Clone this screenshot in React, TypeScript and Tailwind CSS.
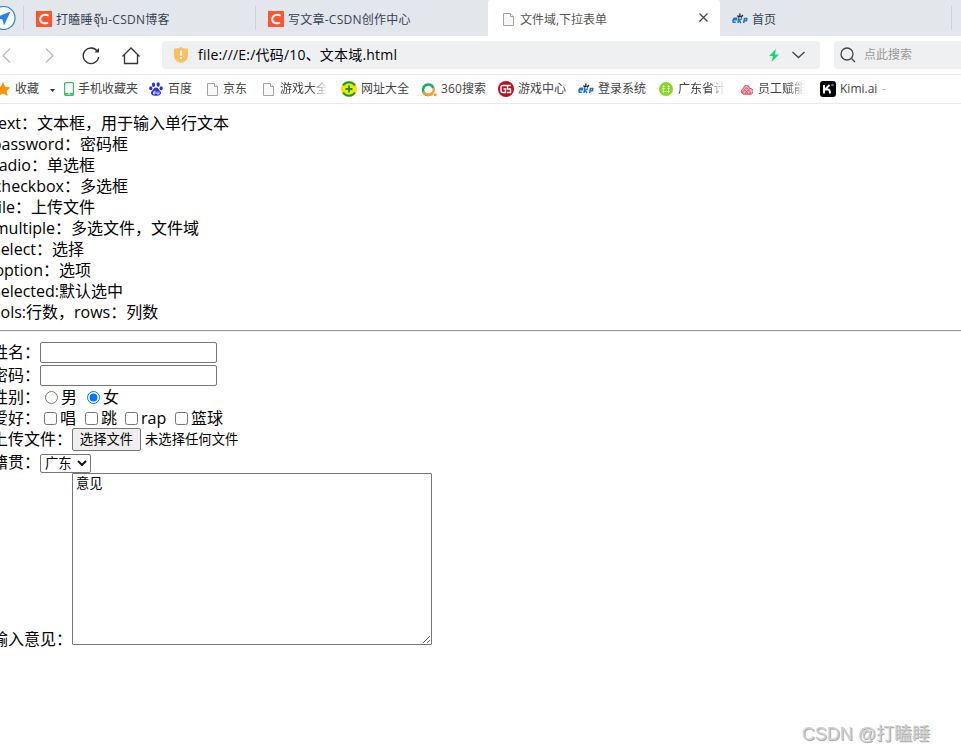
import { FC, ReactNode } from "react";

const FileIcon: FC = () => (
    <svg className="shrink-0" width="12" height="14" viewBox="0 0 12 14" fill="#f7f7f7" stroke="#a3a3a3">
        <path d="M.5 1.500h7l3 3v9H.5z" />
        <path d="M7.500 1.500v3h3" fill="#fff" />
    </svg>
);

const CsdnIcon: FC = () => (
    <svg className="shrink-0" width="16" height="16" viewBox="0 0 16 16">
        <path d="M0 0h16v16H0z" fill="#fc5531" />
        <path
            d="M12.700 4.600C9 2.600 4.500 4 4.200 8.200c-.1 3.700 3.800 4.900 7.800 3.500"
            fill="none"
            stroke="#fff"
            strokeWidth="2"
        />
    </svg>
);

const EkpIcon: FC = () => (
    <svg className="shrink-0" width="16" height="16" viewBox="0 0 16 16" fill="none" strokeWidth="1.500">
        <path d="M.8 8.800h3.600l.2-1.600H2.200L1 9.200l.2 2h2.600" stroke="#1b78c4" />
        <path d="M6.800 7L6 12M10 7.500L7 9.500l2 2.500" stroke="#1b78c4" />
        <path d="M11.600 12l.9-4.500h2.300l-.3 2.300h-2.300" stroke="#1b78c4" />
        <path d="M5.500 4.500l1.800 2M7.800 2.500l.2 3.500M10.800 4L9 6.500" stroke="#222" strokeWidth="1.300" />
    </svg>
);

const Text: FC<{ width: string; className?: string; children: ReactNode }> = ({ width, className = "", children }) => (
    <span className={`block shrink-0 whitespace-nowrap ${width} ${className}`}>{children}</span>
);

const TabBar: FC = () => (
    <div className="flex h-9 bg-[#e3e6eb] text-xs text-[#354355]">
        <div className="relative w-6 shrink-0">
            <svg className="absolute top-[6px] left-[-9px]" width="25" height="24" viewBox="0 0 25 24">
                <circle cx="12.500" cy="12" r="11.500" fill="#fff" stroke="#2c80e8" strokeWidth="1.200" />
                <path d="M19.500 5.500L5 11.500l6.500 2 1.500 6z" fill="#2681f2" />
            </svg>
            <span className="absolute top-[6px] right-0 h-6 w-px bg-[#cfd3d9]" />
        </div>
        <div className="flex w-[232px] shrink-0 items-center gap-1 pt-[2px] pl-3">
            <CsdnIcon />
            <Text width="w-[190px]" className="pt-px tracking-[0.25px]">打瞌睡จุ๊บ-CSDN博客</Text>
        </div>
        <div className="relative flex w-[232px] shrink-0 items-center gap-1 pt-[2px] pl-3">
            <span className="absolute top-[6px] left-[-1px] h-6 w-px bg-[#cfd3d9]" />
            <CsdnIcon />
            <Text width="w-[190px]" className="pt-px tracking-[0.25px]">写文章-CSDN创作中心</Text>
        </div>
        <div className="flex w-[232px] shrink-0 items-center rounded-t-[3px] bg-white pt-[2px] pl-[15px] text-[#555]">
            <FileIcon />
            <Text width="w-[179px]" className="pt-px pl-[5px]">文件域,下拉表单</Text>
            <svg width="9" height="9" viewBox="0 0 9 9" stroke="#444" className="mt-[-3px] ml-[5px]">
                <path d="M.5.5l8 8M8.500.5l-8 8" strokeWidth="1.200" />
            </svg>
        </div>
        <div className="flex w-[231px] shrink-0 items-center gap-1 pt-[2px] pl-3">
            <EkpIcon />
            <Text width="w-[190px]" className="pt-px">首页</Text>
        </div>
        <span className="mt-[6px] h-6 w-px bg-[#cfd3d9]" />
    </div>
);

const AddressBar: FC = () => (
    <div className="flex h-[38px] items-center">
        <svg className="shrink-0" width="162" height="38" viewBox="0 0 162 38" fill="none">
            <path d="M10 12.500L3 19.500l7 7M46 12.500l7 7-7 7" stroke="#b9b9b9" strokeWidth="1.200" />
            <path d="M97.500 15.500A7.800 7.800 0 1 0 98.700 21" stroke="#333" strokeWidth="1.300" />
            <path d="M94.500 16.500h4.500v-4.500z" fill="#333" />
            <path d="M122.500 20.500L131 12l8.500 8.500M124.500 19v8.500h13V19" stroke="#333" strokeWidth="1.300" />
        </svg>
        <div className="flex h-7 w-[658px] shrink-0 items-center rounded bg-[#eff0f2] pl-3">
            <svg className="shrink-0" width="14" height="16" viewBox="0 0 14 16">
                <path d="M0 1.500Q4 2 7 0q3 2 7 1.500V9q0 5-7 7-7-2-7-7z" fill="#ffbf5f" />
                <path d="M7 3.500v5M7 10v2" stroke="#fff" strokeWidth="2" />
            </svg>
            <Text width="w-[581px]" className="pl-[10px] text-sm tracking-[0.2px] text-black">
                file:///E:/代码/10、文本域.html
            </Text>
            <svg className="shrink-0" width="10" height="13" viewBox="0 0 10 13">
                <path d="M7 0L0 7h4L2.500 13 10 5.500H6z" fill="#18d675" />
            </svg>
            <svg className="ml-[13px] shrink-0" width="13" height="8" viewBox="0 0 13 8" fill="none" stroke="#444">
                <path d="M.5 1l6 5.500 6-5.500" strokeWidth="1.300" />
            </svg>
        </div>
        <div className="ml-[14px] flex h-7 w-[140px] items-center rounded-l bg-[#eff0f2] pl-[6px] text-xs text-[#999]">
            <svg width="16" height="16" viewBox="0 0 16 16" fill="none" stroke="#444" strokeWidth="1.300">
                <circle cx="7" cy="7" r="6" />
                <path d="M11.500 11.500L15 15" />
            </svg>
            <span className="ml-2">点此搜索</span>
        </div>
    </div>
);

const Bookmarks: FC = () => (
    <div className="flex h-[30px] items-center border-y border-[#ebebeb] text-xs text-[#444]">
        <svg className="ml-[-5px] shrink-0" width="16" height="16" viewBox="0 0 16 16" fill="#ff9200">
            <path d="M8 1l2.200 4.700 5.100.7-3.700 3.500 1 5.100L8 12.500 3.400 15l1-5.100L.7 6.400l5.100-.7z" />
        </svg>
        <Text width="w-[35px]" className="ml-1">收藏</Text>
        <svg className="mt-[2px] shrink-0" width="5" height="3" viewBox="0 0 5 3" fill="#333">
            <path d="M0 0h5L2.500 3z" />
        </svg>
        <svg className="ml-[9px] shrink-0" width="10" height="14" viewBox="0 0 10 14" fill="none">
            <rect x=".6" y=".6" width="8.800" height="12.800" rx="1" stroke="#3dbb68" strokeWidth="1.200" />
            <path d="M1 11.800h8" stroke="#3dbb68" strokeWidth="1.800" />
            <path d="M4 12h2" stroke="#fff" />
        </svg>
        <Text width="w-[71px]" className="ml-1">手机收藏夹</Text>
        <svg className="shrink-0" width="14" height="14" viewBox="0 0 14 14" fill="#2b32d9">
            <ellipse cx="4.500" cy="2.700" rx="1.600" ry="2.300" />
            <ellipse cx="9.200" cy="2.500" rx="1.600" ry="2.300" />
            <ellipse cx="1.800" cy="6.200" rx="1.600" ry="2" />
            <ellipse cx="12.200" cy="6.200" rx="1.600" ry="2" />
            <path d="M7 5.500c2 0 2.500 2 4.500 4 1.500 2-.5 4.700-4.500 4.200-4 .5-6-2.200-4.500-4.200C4.500 7.500 5 5.500 7 5.500z" />
            <path d="M6 8.500v3.500H4.500V10H6M8 9.500V12h2V9.500" fill="none" stroke="#fff" strokeWidth=".8" />
        </svg>
        <Text width="w-[39px]" className="ml-[5px]">百度</Text>
        <FileIcon />
        <Text width="w-[40px]" className="ml-[4px]">京东</Text>
        <FileIcon />
        <Text width="w-[48px]" className="mr-[13px] ml-[5px] mask-r-from-65%">游戏大全</Text>
        <svg className="shrink-0" width="16" height="16" viewBox="0 0 16 16">
            <circle cx="8" cy="8" r="8" fill="#ffe100" />
            <path d="M2 4.500A7.200 7.200 0 0 1 14 4.500M2 11.500a7.200 7.200 0 0 0 12 0M8 4.500v7M4.500 8h7" stroke="#0a9d46" strokeWidth="2" fill="none" />
        </svg>
        <Text width="w-[60px]" className="ml-1">网址大全</Text>
        <svg className="shrink-0" width="16" height="16" viewBox="0 0 16 16" fill="none">
            <path d="M11.500 12A5.300 5.300 0 1 1 12.300 7" stroke="#18ad6b" strokeWidth="2.600" />
            <path d="M2.500 10.500a5.300 5.300 0 0 0 10-3.500" stroke="#fa9e2e" strokeWidth="2.600" />
            <circle cx="14.300" cy="13.800" r="1.500" fill="#fa9e2e" />
        </svg>
        <Text width="w-[57px]" className="ml-1 tracking-[0.1px]">360搜索</Text>
        <svg className="shrink-0" width="16" height="16" viewBox="0 0 16 16">
            <circle cx="8" cy="8" r="8" fill="#b51222" />
            <path d="M13 4.500H5a2 2 0 0 0-2 2v3a2 2 0 0 0 2 2h2.500V8H5.500M9.500 4.500V8h3v3.500H9" fill="none" stroke="#fff" strokeWidth="1.400" />
        </svg>
        <Text width="w-[60px]" className="ml-1">游戏中心</Text>
        <EkpIcon />
        <Text width="w-[61px]" className="ml-1">登录系统</Text>
        <svg className="shrink-0" width="14" height="14" viewBox="0 0 14 14">
            <circle cx="7" cy="7" r="7" fill="#85d823" />
            <path d="M3 4.500h3M3 6.500h3M4.500 3v8M8 4.500h3M8 6.500h3M9.500 3v8M3 9.500h8" stroke="#e4f8c8" strokeWidth=".8" />
        </svg>
        <Text width="w-[47px]" className="mr-[15px] ml-[5px] mask-r-from-65%">广东省计</Text>
        <svg className="shrink-0" width="13" height="11" viewBox="0 0 13 11" fill="#f6b5c0" stroke="#e2405c">
            <path d="M3.500 4.500a3 3 0 0 1 6 0 3 3 0 1 1-.5 5.700H3.500a3 3 0 0 1 0-5.700z" />
            <path d="M3 10c-1.500-3 2-4.500 3.500-2.500C8 5.500 11.500 7 10 10M4.500 5.500c1-2 3-2 4 0M5 10c0-2.500 3-2.500 3 0" fill="none" />
        </svg>
        <Text width="w-[47px]" className="mr-[15px] ml-[5px] mask-r-from-65%">员工赋能</Text>
        <svg className="shrink-0" width="16" height="16" viewBox="0 0 16 16">
            <rect width="16" height="16" rx="3" fill="#050505" />
            <path d="M4 4v8.500M9.500 4L5 8.500h3q2 0 2 4" fill="none" stroke="#fff" strokeWidth="1.900" />
            <circle cx="12.500" cy="4" r="1.300" fill="#1783ff" />
        </svg>
        <Text width="w-[42px]" className="ml-1">Kimi.ai</Text>
        <span className="text-[#bbb]">-</span>
    </div>
);

// terms are right aligned, the first letter runs off the left edge
const notes = [
    { term: "text", width: "w-[29px]", text: "：文本框，用于输入单行文本" },
    { term: "password", width: "w-[72px]", text: "：密码框" },
    { term: "radio", width: "w-[39px]", text: "：单选框" },
    { term: "checkbox", width: "w-[72px]", text: "：多选框" },
    { term: "file", width: "w-[23px]", text: "：上传文件" },
    { term: "multiple", width: "w-[63px]", text: "：多选文件，文件域" },
    { term: "select", width: "w-[44px]", text: "：选择" },
    { term: "option", width: "w-[51px]", text: "：选项" },
    { term: "selected:", width: "w-[67px]", text: "默认选中" },
    { term: "cols:", width: "w-[34px]", text: "行数，rows：列数" },
];

const hobbies = [
    { name: "唱", width: "w-[21px]" },
    { name: "跳", width: "w-[20px]" },
    { name: "rap", width: "w-[30px]" },
    { name: "篮球", width: "w-[40px]" },
];

const App: FC = () => {
    return (
        <div className="h-[752px] w-[961px] overflow-hidden bg-white font-['Open_Sans','Noto_Sans_CJK_SC',sans-serif]">
            <TabBar />
            <AddressBar />
            <Bookmarks />
            <main className="relative ml-[-8px] h-[648px] pt-[9px] text-base leading-[21px] whitespace-nowrap text-black">
                {notes.map(({ term, width, text }) => (
                    <div key={term} className="flex h-[21px]">
                        <span className={`flex shrink-0 justify-end ${width}`}>{term}</span>
                        <span>{text}</span>
                    </div>
                ))}
                <hr className="mt-[7px] mb-[9px] h-[2px] border-t border-b border-t-[#9a9a9a] border-b-[#eee]" />
                <div className="flex h-[23px] items-center">
                    <span className="w-12">姓名：</span>
                    <input type="text" className="h-[21px] w-[177px] rounded-[2px] border border-[#767676]" />
                </div>
                <div className="flex h-[23px] items-center">
                    <span className="w-12">密码：</span>
                    <input type="password" className="h-[21px] w-[177px] rounded-[2px] border border-[#767676]" />
                </div>
                <div className="flex h-[21px] items-center">
                    <span className="w-12">性别：</span>
                    <input type="radio" name="sex" className="mr-[3px] ml-[5px] size-[13px]" />
                    <span className="w-[21px]">男</span>
                    <input type="radio" name="sex" defaultChecked className="mr-[3px] ml-[5px] size-[13px]" />
                    <span>女</span>
                </div>
                <div className="flex h-[21px] items-center">
                    <span className="w-12">爱好：</span>
                    {hobbies.map(({ name, width }) => (
                        <label key={name} className="flex items-center">
                            <input type="checkbox" className="mr-[3px] ml-1 size-[13px]" />
                            <span className={width}>{name}</span>
                        </label>
                    ))}
                </div>
                <div className="mt-[-1px] flex h-[23px] items-center">
                    <span className="w-20">上传文件：</span>
                    <button className="h-[23px] w-[69px] rounded-[2px] border border-[#767676] bg-[#efefef] text-[13.333px] leading-[19px]">
                        选择文件
                    </button>
                    <span className="ml-1 text-[13.333px]">未选择任何文件</span>
                </div>
                <div className="mt-px flex h-[21px] items-center">
                    <span className="w-12">籍贯：</span>
                    <div className="mt-px flex h-[19px] w-[51px] items-center rounded-[2px] border border-[#767676] pl-1 text-[13.333px]">
                        广东
                        <svg className="ml-[5px]" width="10" height="6" viewBox="0 0 10 6" fill="none" stroke="#111">
                            <path d="M1 1l4 4 4-4" strokeWidth="2" />
                        </svg>
                    </div>
                </div>
                <div className="flex h-[172px] items-end">
                    <span className="mb-[-5px] w-20">输入意见：</span>
                    <textarea
                        className="h-[172px] w-[360px] rounded-[1px] border border-[#767676] px-[3px] py-px text-[13.333px] leading-[17px]"
                        defaultValue="意见"
                    />
                </div>
                <span className="absolute right-[31px] bottom-[4px] font-['Liberation_Sans','Noto_Sans_CJK_SC',sans-serif] text-lg leading-[27px] text-[#d0d0d0] [text-shadow:1px_1px_0_#aaa]">
                    CSDN @打瞌睡
                </span>
            </main>
        </div>
    );
};

export default App;
